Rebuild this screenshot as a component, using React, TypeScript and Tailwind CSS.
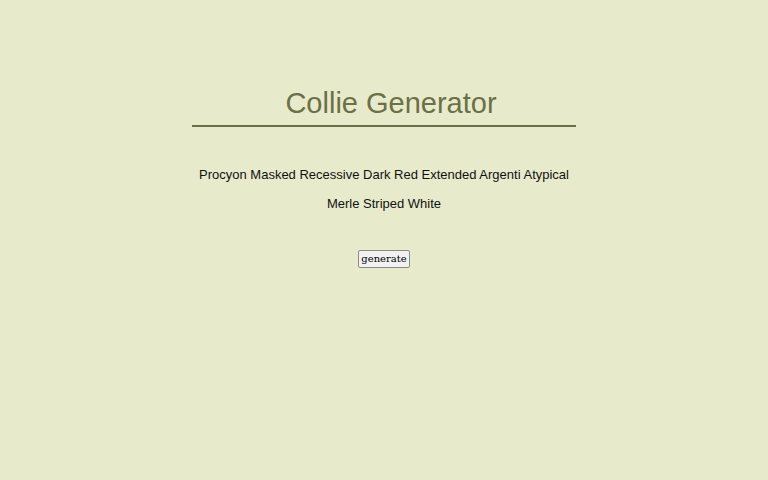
import { useState } from "react";

const NAMES = [
  "Procyon Masked Recessive Dark Red Extended Argenti Atypical Merle Striped White",
];

export default function App() {
  const [idx, setIdx] = useState(0);
  const name = NAMES[idx % NAMES.length];

  return (
    <div className="min-h-[480px] w-full bg-[#e8ebcb] font-['Liberation_Sans',Arial,sans-serif]">
      <div className="mx-auto w-[384px] pt-[85px] text-center">
        {/* Title with underline rule */}
        <h1 className="border-b-2 border-[#6b7048] pb-[4px] pl-[14px] text-[29px] leading-[36px] text-[#6b7048]">
          Collie Generator
        </h1>

        {/* Generated name */}
        <p className="mt-[33px] px-[6px] text-[13px] leading-[29px] text-[#111]">
          {name}
        </p>

        <button
          onClick={() => setIdx(idx + 1)}
          className="mt-[32px] rounded-[2px] border border-[#8a8a8a] bg-[#f2f2f2] px-[2px] py-[1px] font-['DejaVu_Serif',serif] text-[10px] leading-[14px] text-black"
        >
          generate
        </button>
      </div>
    </div>
  );
}
